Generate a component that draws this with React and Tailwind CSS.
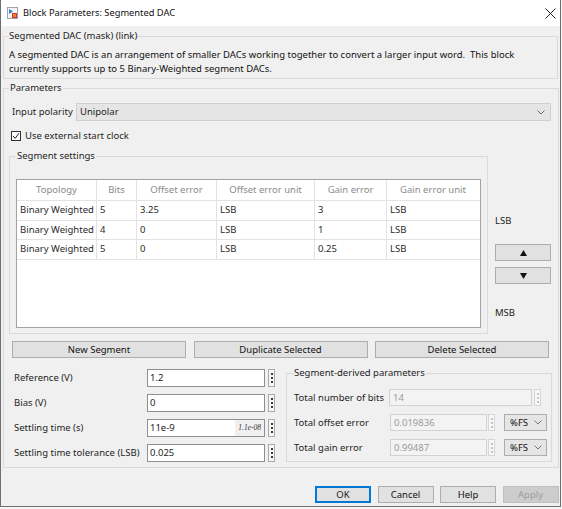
import React from "react";

function Dots({ disabled = false, h = "h-[18px]" }) {
  const dot = disabled ? "bg-[#c4c4c4]" : "bg-[#3a3a3a]";
  return (
    <div
      className={`w-[7px] ${h} shrink-0 border ${
        disabled ? "border-[#d6d6d6]" : "border-[#a9a9a9]"
      } bg-[#f7f7f7] flex flex-col items-center justify-center gap-[2px]`}
    >
      <span className={`block w-[2px] h-[2px] ${dot}`} />
      <span className={`block w-[2px] h-[2px] ${dot}`} />
      <span className={`block w-[2px] h-[2px] ${dot}`} />
    </div>
  );
}

function Chevron({ color = "#6b6b6b" }) {
  return (
    <svg width="8" height="5" viewBox="0 0 8 5" className="shrink-0">
      <path d="M0.5 0.5 L4 4 L7.5 0.5" fill="none" stroke={color} strokeWidth="1" />
    </svg>
  );
}

function Btn({ children, className = "" }) {
  return (
    <div
      className={`h-[17px] bg-[#e1e1e1] border border-[#adadad] flex items-center justify-center text-[#111] ${className}`}
    >
      {children}
    </div>
  );
}

const cols = "grid grid-cols-[80px_40px_80px_98px_72px_92px]";
const headers = ["Topology", "Bits", "Offset error", "Offset error unit", "Gain error", "Gain error unit"];
const rows = [
  ["Binary Weighted", "5", "3.25", "LSB", "3", "LSB"],
  ["Binary Weighted", "4", "0", "LSB", "1", "LSB"],
  ["Binary Weighted", "5", "0", "LSB", "0.25", "LSB"],
];

function LeftRow({ label, value, extra }) {
  return (
    <div className="flex items-center h-[18px]">
      <div className="w-[133px] shrink-0">{label}</div>
      <div className="w-[118px] h-[18px] border border-[#8f8f8f] bg-white flex items-center">
        <span className="pl-[2px] flex-1">{value}</span>
        {extra && (
          <span className="h-full bg-[#f0f0f0] flex items-center px-[3px] font-['Liberation_Serif',serif] italic text-[7.5px] text-[#333]">
            {extra}
          </span>
        )}
      </div>
      <div className="ml-[3px]">
        <Dots />
      </div>
    </div>
  );
}

function DisabledInput({ value, w }) {
  return (
    <div className={`${w} h-[17px] border border-[#d2d2d2] bg-[#f3f3f3] flex items-center pl-[3px] text-[#9a9a9a]`}>
      {value}
    </div>
  );
}

function FsSelect() {
  return (
    <div className="w-[43px] h-[17px] border border-[#adadad] bg-[#e5e5e5] flex items-center pl-[5px] pr-[4px] justify-between text-[#111]">
      <span>%FS</span>
      <Chevron color="#777" />
    </div>
  );
}

export default function App() {
  return (
    <div className="w-[562px] h-[509px] bg-[#f4f4f4] font-['Noto_Sans',sans-serif] text-[9.5px] leading-[14px] text-[#1e1e1e] overflow-hidden whitespace-nowrap">
      <div className="w-[561px] h-[507px] border-x border-b border-[#6f6f6f] bg-[#f0f0f0] flex flex-col">
        {/* Title bar */}
        <div className="h-[26px] shrink-0 bg-white flex items-center pl-[6px] pr-[4px]">
          <svg width="11" height="12" viewBox="0 0 11 12" className="shrink-0">
            <rect x="0.5" y="0.5" width="10" height="11" fill="#f4f6f8" stroke="#9aa3ad" />
            <path d="M2 2 L6 4.5 L2 7 Z" fill="#2f7fd0" />
            <rect x="5" y="6" width="5" height="5" fill="#d9342b" />
            <rect x="6" y="7" width="3" height="3" fill="#f07c3a" />
          </svg>
          <span className="ml-[5px] text-[9.3px] text-[#111]">Block Parameters: Segmented DAC</span>
          <div className="flex-1" />
          <svg width="11" height="11" viewBox="0 0 11 11">
            <path d="M0.5 0.5 L10.5 10.5 M10.5 0.5 L0.5 10.5" stroke="#222" strokeWidth="1" />
          </svg>
        </div>

        {/* Mask description */}
        <fieldset className="mx-[2px] mt-[3px] border border-[#dadada] px-[5px] pb-[2px]">
          <legend className="px-0 text-[#222]">Segmented DAC (mask) (link)</legend>
          <div className="pt-[5px] text-[#111]">
            A segmented DAC is an arrangement of smaller DACs working together to convert a larger input word.&nbsp; This block
            <br />
            currently supports up to 5 Binary-Weighted segment DACs.
          </div>
        </fieldset>

        {/* Parameters */}
        <fieldset className="mx-[2px] mt-[2px] border border-[#dadada] pl-[5px] pr-[6px] pb-[5px]">
          <legend className="px-[1px]">Parameters</legend>

          <div className="flex items-center mt-[8px]">
            <div className="ml-[3px] w-[64px] shrink-0">Input polarity</div>
            <div className="flex-1 mr-[1px] h-[18px] bg-[#e5e5e5] border border-[#cfcfcf] flex items-center pl-[3px] pr-[5px] justify-between">
              <span>Unipolar</span>
              <Chevron />
            </div>
          </div>

          <div className="flex items-center mt-[8px] ml-[2px]">
            <div className="w-[10px] h-[10px] border border-[#333] bg-white flex items-center justify-center">
              <svg width="8" height="8" viewBox="0 0 8 8">
                <path d="M1 4 L3.2 6.3 L7 1.2" fill="none" stroke="#222" strokeWidth="1" />
              </svg>
            </div>
            <span className="ml-[4px]">Use external start clock</span>
          </div>

          {/* Segment settings + side controls */}
          <div className="flex mt-[6px]">
            <fieldset className="w-[479px] shrink-0 border border-[#dadada] px-[6px] pt-[16px] pb-[5px]">
              <legend className="px-[1px]">Segment settings</legend>
              <div className="h-[149px] border border-[#a3a3a3] bg-white">
                <div className={`${cols} h-[21px] border-b border-[#e3e3e3]`}>
                  {headers.map((h, i) => (
                    <div
                      key={h}
                      className={`flex items-center justify-center text-[#8b8b8b] ${i < 5 ? "border-r border-[#e3e3e3]" : ""}`}
                    >
                      {h}
                    </div>
                  ))}
                </div>
                {rows.map((r, ri) => (
                  <div key={ri} className={`${cols} h-[19.5px] border-b border-[#e3e3e3]`}>
                    {r.map((c, i) => (
                      <div
                        key={i}
                        className={`flex items-center pl-[3px] text-[#2a2a2a] overflow-hidden ${i < 5 ? "border-r border-[#e3e3e3]" : ""}`}
                      >
                        {c}
                      </div>
                    ))}
                  </div>
                ))}
              </div>
            </fieldset>
            <div className="ml-[7px] w-[56px] flex flex-col">
              <div className="mt-[65px]">LSB</div>
              <Btn className="mt-[16px]">
                <svg width="7" height="6" viewBox="0 0 7 6"><path d="M3.5 0 L7 6 L0 6 Z" fill="#111" /></svg>
              </Btn>
              <Btn className="mt-[6px]">
                <svg width="7" height="6" viewBox="0 0 7 6"><path d="M0 0 L7 0 L3.5 6 Z" fill="#111" /></svg>
              </Btn>
              <div className="mt-[22px]">MSB</div>
            </div>
          </div>

          {/* Segment buttons */}
          <div className="flex mt-[7px] ml-[3px] gap-x-[7.5px]">
            <Btn className="w-[174px]">New Segment</Btn>
            <Btn className="w-[174px]">Duplicate Selected</Btn>
            <Btn className="w-[174px]">Delete Selected</Btn>
          </div>

          {/* Bottom section */}
          <div className="flex items-start">
            <div className="ml-[5px] mt-[11px] flex flex-col gap-[7px]">
              <LeftRow label="Reference (V)" value="1.2" />
              <LeftRow label="Bias (V)" value="0" />
              <LeftRow label="Settling time (s)" value="11e-9" extra="1.1e-08" />
              <LeftRow label="Settling time tolerance (LSB)" value="0.025" />
            </div>
            <fieldset className="ml-[11px] mt-[8px] w-[266px] border border-[#dadada] pl-[7px] pt-[9px] pb-[5px]">
              <legend className="px-0">Segment-derived parameters</legend>
              <div className="flex flex-col gap-[8px]">
                <div className="flex items-center h-[17px]">
                  <div className="w-[95px] shrink-0">Total number of bits</div>
                  <DisabledInput value="14" w="w-[143px]" />
                  <div className="ml-[2px]"><Dots disabled h="h-[17px]" /></div>
                </div>
                <div className="flex items-center h-[17px]">
                  <div className="w-[96px] shrink-0">Total offset error</div>
                  <DisabledInput value="0.019836" w="w-[97px]" />
                  <div className="ml-[1px]"><Dots disabled h="h-[17px]" /></div>
                  <div className="ml-[9px]"><FsSelect /></div>
                </div>
                <div className="flex items-center h-[17px]">
                  <div className="w-[96px] shrink-0">Total gain error</div>
                  <DisabledInput value="0.99487" w="w-[97px]" />
                  <div className="ml-[1px]"><Dots disabled h="h-[17px]" /></div>
                  <div className="ml-[9px]"><FsSelect /></div>
                </div>
              </div>
            </fieldset>
          </div>
        </fieldset>

        {/* Dialog buttons */}
        <div className="flex mt-[18px] pl-[314px] gap-x-[6.5px]">
          <div className="w-[56px] h-[17px] bg-[#e1e1e1] border border-[#0078d7] shadow-[inset_0_0_0_1px_#0078d7] flex items-center justify-center">OK</div>
          <Btn className="w-[56px]">Cancel</Btn>
          <Btn className="w-[56px]">Help</Btn>
          <div className="w-[56px] h-[17px] bg-[#cccccc] border border-[#bfbfbf] flex items-center justify-center text-[#9d9d9d]">Apply</div>
        </div>
      </div>
    </div>
  );
}
